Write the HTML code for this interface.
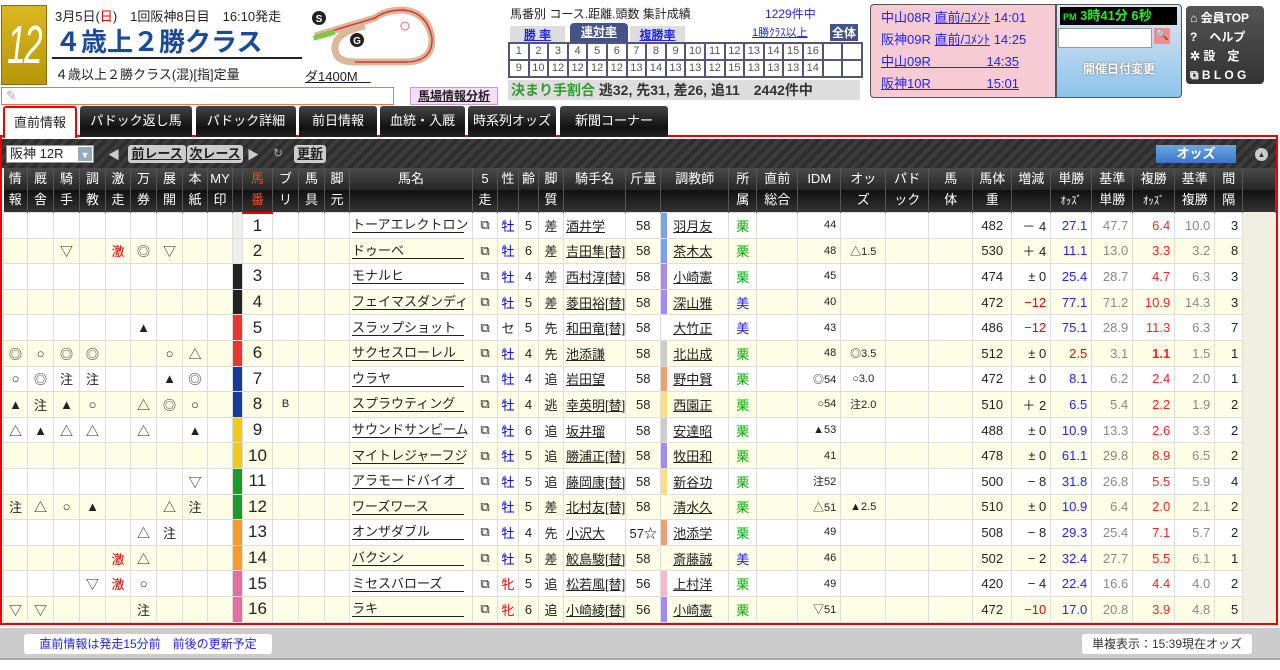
<!DOCTYPE html>
<html><head><meta charset="utf-8">
<style>
*{box-sizing:border-box;margin:0;padding:0}
body{width:1280px;height:670px;overflow:hidden;background:#fff;font-family:"Liberation Sans","Noto Sans CJK JP",sans-serif;font-size:13px;color:#222;position:relative}
.a{position:absolute}
a,u{color:inherit}
.badge{left:1px;top:5px;width:46px;height:80px;background:linear-gradient(#d9b820,#b8960a);border:1px solid #8a7000;overflow:hidden}
.badge b{display:block;color:#fff;font:italic 54px "Liberation Sans Narrow","Liberation Sans",sans-serif;text-align:center;line-height:78px;letter-spacing:-3px;transform:scaleX(0.62);margin-left:-14px;width:72px}
.tab{top:106px;height:31px;background:linear-gradient(#444,#111 70%,#222);color:#fff;font-size:13px;text-align:center;line-height:30px;border-radius:3px 3px 0 0}
table{border-collapse:collapse;table-layout:fixed;position:absolute;left:3px;top:168px}
td{border:1px solid #ddd;height:25.6px;text-align:center;font-size:13px;white-space:nowrap;overflow:hidden;padding:0}
th{background:linear-gradient(#4a4a4a,#262626 50%,#111 50%,#333);color:#fff;font-weight:normal;font-size:13px;line-height:21px;height:42px;border-right:1px solid #555;vertical-align:top}
tr.y td{background:#fefee6}
td.f{background:#f1efe1 !important;border-color:#f1efe1}
.n{font-size:17px}
.hn{text-align:left;padding-left:2px}
.hn u{display:inline-block;width:112px;text-decoration:none;border-bottom:1px solid #222;line-height:15px}
.m{color:#00f}.fm{color:#f00}
.jk{text-align:left;padding-left:2px}
.jk u{text-decoration:underline}
.tr{text-align:left;position:relative;padding-left:12px}
.tr i{position:absolute;left:0;top:0;bottom:0;width:6px}
.rt{color:#0a0}.mh{color:#22f}
.r{text-align:right;padding-right:4px}
.tb{color:#22f}.gk{color:#888}.fk{color:#f22}
.dk{border-left:1px solid #999}
.grid span{border:1px solid #557;height:17px;text-align:center;line-height:15px}
</style></head><body>
<div class="a badge"><b>12</b></div>
<div class="a" style="left:55px;top:6px;font-size:13px">3月5日(<span style="color:#e00">日</span>)　1回阪神8日目　16:10発走</div>
<div class="a" style="left:55px;top:22px;font-size:26px;font-weight:bold;color:#1a4a9a;letter-spacing:0px">４歳上２勝クラス</div>
<div class="a" style="left:52px;top:57px;width:250px;border-top:2px solid #222"></div>
<div class="a" style="left:55px;top:64px;font-size:13px">４歳以上２勝クラス(混)[指]定量</div>
<svg class="a" style="left:305px;top:2px" width="130" height="65" viewBox="0 0 130 65">
<path d="M10 34 L70 16 Q80 8 98 8 Q122 10 127 36 Q128 60 100 60 L50 60 Q30 60 30 46 Q30 30 60 24" fill="none" stroke="#d9b99a" stroke-width="7"/>
<path d="M10 34 L70 16 Q80 8 98 8 Q122 10 127 36 Q128 60 100 60 L50 60" fill="none" stroke="#d33" stroke-width="1.5"/>
<rect x="8" y="31" width="22" height="5" fill="#7c4" transform="rotate(-16 18 33)"/>
<circle cx="14" cy="16" r="7" fill="#222"/><text x="14" y="20" font-size="10" fill="#fff" text-anchor="middle" font-weight="bold">S</text>
<circle cx="52" cy="38" r="7" fill="#222"/><text x="52" y="42" font-size="10" fill="#fff" text-anchor="middle" font-weight="bold">G</text>
<circle cx="100" cy="24" r="4" fill="none" stroke="#e66"/>
</svg>
<div class="a" style="left:305px;top:66px;font-size:13px;text-decoration:underline">ダ1400M　</div>
<div class="a" style="left:1px;top:87px;width:393px;height:18px;border:1px solid #f07050"></div>
<div class="a" style="left:6px;top:88px;color:#aaa">✎</div>
<div class="a" style="left:410px;top:87px;width:88px;height:18px;background:#f6dcf6;border:1px solid #c9c;font-size:12px;font-weight:bold;text-align:center;line-height:16px;text-decoration:underline">馬場情報分析</div>

<div class="a" style="left:510px;top:5px;font-size:12px">馬番別 コース.距離.頭数 集計成績</div>
<div class="a" style="left:765px;top:5px;font-size:12px;color:#22f">1229件中</div>
<div class="a" style="left:510px;top:26px;width:55px;height:16px;background:#ddd;color:#22f;font-size:12px;font-weight:bold;text-align:center;text-decoration:underline">勝 率</div>
<div class="a" style="left:570px;top:23px;width:58px;height:19px;background:#44548a;color:#fff;font-size:12px;font-weight:bold;text-align:center;line-height:19px;border-radius:4px 4px 0 0;text-decoration:underline">連対率</div>
<div class="a" style="left:630px;top:26px;width:55px;height:16px;background:#ddd;color:#22f;font-size:12px;font-weight:bold;text-align:center;text-decoration:underline">複勝率</div>
<div class="a" style="left:752px;top:24px;font-size:11px;color:#22f;text-decoration:underline">1勝ｸﾗｽ以上</div>
<div class="a" style="left:830px;top:24px;width:28px;height:17px;background:#44548a;color:#fff;font-size:12px;font-weight:bold;text-align:center">全体</div>
<div class="a grid" style="left:508px;top:42px;display:grid;grid-template-columns:repeat(18,19.6px);font-size:11px;color:#555;border:1px solid #557;">
<span>1</span><span>2</span><span>3</span><span>4</span><span>5</span><span>6</span><span>7</span><span>8</span><span>9</span><span>10</span><span>11</span><span>12</span><span>13</span><span>14</span><span>15</span><span>16</span><span></span><span></span>
<span>9</span><span>10</span><span>12</span><span>12</span><span>12</span><span>12</span><span>13</span><span>14</span><span>13</span><span>13</span><span>12</span><span>15</span><span>13</span><span>13</span><span>13</span><span>14</span><span></span><span></span>
</div>
<div class="a" style="left:508px;top:80px;width:352px;height:20px;background:#ddd;font-size:14px;font-weight:bold;line-height:20px;padding-left:3px;color:#333"><span style="color:#393">決まり手割合</span> 逃32, 先31, 差26, 追11　2442件中</div>

<div class="a" style="left:870px;top:4px;width:186px;height:94px;background:#f7cbd3;border:1px solid #555;border-radius:4px 0 0 4px;color:#22f;font-size:13px;line-height:22px;padding:2px 0 0 10px">
<div>中山08R <u>直前/ｺﾒﾝﾄ</u> 14:01</div><div>阪神09R <u>直前/ｺﾒﾝﾄ</u> 14:25</div><div><u>中山09R　　　　 14:35</u></div><div><u>阪神10R　　　　 15:01</u></div></div>
<div class="a" style="left:1056px;top:4px;width:126px;height:94px;background:linear-gradient(#dfe6f0,#8cc4ec);border:1px solid #555;border-radius:0 4px 4px 0"></div>
<div class="a" style="left:1060px;top:7px;width:117px;height:18px;background:#000;color:#2e2;font-size:13px;font-weight:bold;line-height:18px;padding-left:3px"><span style="font-size:9px">PM</span> 3時41分 6秒</div>
<div class="a" style="left:1058px;top:28px;width:94px;height:20px;background:#fff;border:1px solid #999"></div>
<div class="a" style="left:1154px;top:28px;width:16px;height:16px;background:#f88;color:#fff;font-size:11px;text-align:center">🔍</div>
<div class="a" style="left:1056px;top:60px;width:126px;text-align:center;color:#fff;font-weight:bold;font-size:12px;text-shadow:0 0 2px #666">開催日付変更</div>
<div class="a" style="left:1186px;top:6px;width:78px;height:78px;background:linear-gradient(#555,#333);border-radius:4px;color:#fff;font-weight:bold;font-size:12px;line-height:19px;padding:3px 0 0 4px">
<div>⌂ 会員TOP</div><div>?　ヘルプ</div><div>✲ 設　定</div><div>⧉ B L O G</div></div>

<div class="a" style="left:0;top:135px;width:1278px;height:490px;border:2px solid #e00"></div>
<div class="a" style="left:3px;top:106px;width:74px;height:32px;background:#fff;border:2px solid #e00;border-bottom:0;border-radius:3px 3px 0 0;text-align:center;line-height:30px">直前情報</div>
<div class="a tab" style="left:80px;width:112px">パドック返し馬</div>
<div class="a tab" style="left:196px;width:100px">パドック詳細</div>
<div class="a tab" style="left:299px;width:78px">前日情報</div>
<div class="a tab" style="left:380px;width:85px">血統・入厩</div>
<div class="a tab" style="left:468px;width:88px">時系列オッズ</div>
<div class="a tab" style="left:560px;width:108px">新聞コーナー</div>

<div class="a" style="left:2px;top:139px;width:1274px;height:29px;background:repeating-linear-gradient(135deg,#2e2e2e 0 4px,#3c3c3c 4px 8px)"></div>
<div class="a" style="left:6px;top:145px;width:88px;height:18px;background:#fff;border:1px solid #999;font-size:13px;line-height:16px;padding-left:3px">阪神 12R <span style="position:absolute;right:1px;top:1px;width:14px;height:14px;background:#9ab;color:#fff;font-size:9px;text-align:center">▼</span></div>
<div class="a" style="left:108px;top:146px;color:#ccc;font-size:12px">◀</div>
<div class="a" style="left:128px;top:145px;width:58px;height:18px;background:#ccc;border-radius:3px;font-weight:bold;text-align:center;line-height:18px;text-decoration:underline">前レース</div>
<div class="a" style="left:187px;top:145px;width:56px;height:18px;background:#ccc;border-radius:3px;font-weight:bold;text-align:center;line-height:18px;text-decoration:underline">次レース</div>
<div class="a" style="left:247px;top:146px;color:#ccc;font-size:12px">▶</div>
<div class="a" style="left:273px;top:146px;color:#aaa;font-size:12px">↻</div>
<div class="a" style="left:294px;top:145px;width:32px;height:18px;background:#ccc;border-radius:3px;font-weight:bold;text-align:center;line-height:18px;text-decoration:underline">更新</div>
<div class="a" style="left:1156px;top:145px;width:80px;height:18px;background:linear-gradient(#6ba5e0,#3a78c8);color:#fff;font-weight:bold;text-align:center;line-height:18px">オッズ</div>
<div class="a" style="left:1255px;top:148px;width:13px;height:13px;border-radius:50%;background:#ccc;color:#333;font-size:8px;text-align:center;line-height:13px">▲</div>

<table>
<colgroup><col style="width:24px"><col style="width:26px"><col style="width:26px"><col style="width:26px"><col style="width:25px"><col style="width:26px"><col style="width:26px"><col style="width:25px"><col style="width:25px"><col style="width:10px"><col style="width:30px"><col style="width:26px"><col style="width:26px"><col style="width:25px"><col style="width:123px"><col style="width:25px"><col style="width:21px"><col style="width:20px"><col style="width:25px"><col style="width:62px"><col style="width:35px"><col style="width:68px"><col style="width:28px"><col style="width:41px"><col style="width:43px"><col style="width:45px"><col style="width:43px"><col style="width:44px"><col style="width:39px"><col style="width:39px"><col style="width:41px"><col style="width:41px"><col style="width:42px"><col style="width:40px"><col style="width:28px"><col style="width:33px"></colgroup>
<tr><th>情<br>報</th><th>厩<br>舎</th><th>騎<br>手</th><th>調<br>教</th><th>激<br>走</th><th>万<br>券</th><th>展<br>開</th><th>本<br>紙</th><th>MY<br>印</th><th></th><th style="color:#f42;border-bottom:2px solid #e00">馬<br>番</th><th>ブ<br>リ</th><th>馬<br>具</th><th>脚<br>元</th><th>馬名</th><th>5<br>走</th><th>性</th><th>齢</th><th>脚<br>質</th><th>騎手名</th><th>斤量</th><th>調教師</th><th>所<br>属</th><th>直前<br>総合</th><th>IDM</th><th>オッ<br>ズ</th><th>パド<br>ック</th><th>馬<br>体</th><th>馬体<br>重</th><th>増減</th><th>単勝<br><small>ｵｯｽﾞ</small></th><th>基準<br>単勝</th><th>複勝<br><small>ｵｯｽﾞ</small></th><th>基準<br>複勝</th><th>間<br>隔</th><th></th></tr>

<tr><td></td><td></td><td></td><td></td><td></td><td></td><td></td><td></td><td></td><td style="background:#eee"></td><td class="n">1</td><td></td><td></td><td></td><td class="hn"><u>トーアエレクトロン</u></td><td>⧉</td><td class="m dk">牡</td><td>5</td><td>差</td><td class="jk dk"><u>酒井学</u></td><td>58</td><td class="tr"><i style="background:#7aa0f0"></i><u>羽月友</u></td><td class="rt">栗</td><td class="dk"></td><td class="r" style="font-size:11px">44</td><td></td><td></td><td class="dk"></td><td>482</td><td class="r">－ 4</td><td class="r tb">27.1</td><td class="r gk">47.7</td><td class="r fk">6.4</td><td class="r gk">10.0</td><td class="r dk">3</td><td class="f"></td></tr>
<tr class="y"><td></td><td></td><td>▽</td><td></td><td style="color:#e00">激</td><td>◎</td><td>▽</td><td></td><td></td><td style="background:#eee !important"></td><td class="n">2</td><td></td><td></td><td></td><td class="hn"><u>ドゥーベ</u></td><td>⧉</td><td class="m dk">牡</td><td>6</td><td>差</td><td class="jk dk"><u>吉田隼[替]</u></td><td>58</td><td class="tr"><i style="background:#7aa0f0"></i><u>茶木太</u></td><td class="rt">栗</td><td class="dk"></td><td class="r" style="font-size:11px">48</td><td style="font-size:11px">△1.5</td><td></td><td class="dk"></td><td>530</td><td class="r">＋ 4</td><td class="r tb">11.1</td><td class="r gk">13.0</td><td class="r fk">3.3</td><td class="r gk">3.2</td><td class="r dk">8</td><td class="f"></td></tr>
<tr><td></td><td></td><td></td><td></td><td></td><td></td><td></td><td></td><td></td><td style="background:#222"></td><td class="n">3</td><td></td><td></td><td></td><td class="hn"><u>モナルヒ</u></td><td>⧉</td><td class="m dk">牡</td><td>4</td><td>差</td><td class="jk dk"><u>西村淳[替]</u></td><td>58</td><td class="tr"><i style="background:#a58af0"></i><u>小崎憲</u></td><td class="rt">栗</td><td class="dk"></td><td class="r" style="font-size:11px">45</td><td></td><td></td><td class="dk"></td><td>474</td><td class="r">± 0</td><td class="r tb">25.4</td><td class="r gk">28.7</td><td class="r fk">4.7</td><td class="r gk">6.3</td><td class="r dk">3</td><td class="f"></td></tr>
<tr class="y"><td></td><td></td><td></td><td></td><td></td><td></td><td></td><td></td><td></td><td style="background:#222 !important"></td><td class="n">4</td><td></td><td></td><td></td><td class="hn"><u>フェイマスダンディ</u></td><td>⧉</td><td class="m dk">牡</td><td>5</td><td>差</td><td class="jk dk"><u>菱田裕[替]</u></td><td>58</td><td class="tr"><i style="background:#a58af0"></i><u>深山雅</u></td><td class="mh">美</td><td class="dk"></td><td class="r" style="font-size:11px">40</td><td></td><td></td><td class="dk"></td><td>472</td><td class="r" style="color:#e00">−12</td><td class="r tb">77.1</td><td class="r gk">71.2</td><td class="r fk">10.9</td><td class="r gk">14.3</td><td class="r dk">3</td><td class="f"></td></tr>
<tr><td></td><td></td><td></td><td></td><td></td><td>▲</td><td></td><td></td><td></td><td style="background:#e33"></td><td class="n">5</td><td></td><td></td><td></td><td class="hn"><u>スラップショット</u></td><td>⧉</td><td class="dk">セ</td><td>5</td><td>先</td><td class="jk dk"><u>和田竜[替]</u></td><td>58</td><td class="tr"><i></i><u>大竹正</u></td><td class="mh">美</td><td class="dk"></td><td class="r" style="font-size:11px">43</td><td></td><td></td><td class="dk"></td><td>486</td><td class="r" style="color:#e00">−12</td><td class="r tb">75.1</td><td class="r gk">28.9</td><td class="r fk">11.3</td><td class="r gk">6.3</td><td class="r dk">7</td><td class="f"></td></tr>
<tr class="y"><td>◎</td><td>○</td><td>◎</td><td>◎</td><td></td><td></td><td>○</td><td>△</td><td></td><td style="background:#e33 !important"></td><td class="n">6</td><td></td><td></td><td></td><td class="hn"><u>サクセスローレル</u></td><td>⧉</td><td class="m dk">牡</td><td>4</td><td>先</td><td class="jk dk"><u>池添謙</u></td><td>58</td><td class="tr"><i style="background:#ccc"></i><u>北出成</u></td><td class="rt">栗</td><td class="dk"></td><td class="r" style="font-size:11px">48</td><td style="font-size:11px">◎3.5</td><td></td><td class="dk"></td><td>512</td><td class="r">± 0</td><td class="r" style="color:#e00">2.5</td><td class="r gk">3.1</td><td class="r fk"><b>1.1</b></td><td class="r gk">1.5</td><td class="r dk">1</td><td class="f"></td></tr>
<tr><td>○</td><td>◎</td><td>注</td><td>注</td><td></td><td></td><td>▲</td><td>◎</td><td></td><td style="background:#1a3a9a"></td><td class="n">7</td><td></td><td></td><td></td><td class="hn"><u>ウラヤ</u></td><td>⧉</td><td class="m dk">牡</td><td>4</td><td>追</td><td class="jk dk"><u>岩田望</u></td><td>58</td><td class="tr"><i style="background:#f0a070"></i><u>野中賢</u></td><td class="rt">栗</td><td class="dk"></td><td class="r" style="font-size:11px">◎54</td><td style="font-size:11px">○3.0</td><td></td><td class="dk"></td><td>472</td><td class="r">± 0</td><td class="r tb">8.1</td><td class="r gk">6.2</td><td class="r fk">2.4</td><td class="r gk">2.0</td><td class="r dk">1</td><td class="f"></td></tr>
<tr class="y"><td>▲</td><td>注</td><td>▲</td><td>○</td><td></td><td>△</td><td>◎</td><td>○</td><td></td><td style="background:#1a3a9a !important"></td><td class="n">8</td><td style="font-size:11px">B</td><td></td><td></td><td class="hn"><u>スプラウティング</u></td><td>⧉</td><td class="m dk">牡</td><td>4</td><td>逃</td><td class="jk dk"><u>幸英明[替]</u></td><td>58</td><td class="tr"><i style="background:#f8e080"></i><u>西園正</u></td><td class="rt">栗</td><td class="dk"></td><td class="r" style="font-size:11px">○54</td><td style="font-size:11px">注2.0</td><td></td><td class="dk"></td><td>510</td><td class="r">＋ 2</td><td class="r tb">6.5</td><td class="r gk">5.4</td><td class="r fk">2.2</td><td class="r gk">1.9</td><td class="r dk">2</td><td class="f"></td></tr>
<tr><td>△</td><td>▲</td><td>△</td><td>△</td><td></td><td>△</td><td></td><td>▲</td><td></td><td style="background:#f0cc10"></td><td class="n">9</td><td></td><td></td><td></td><td class="hn"><u>サウンドサンビーム</u></td><td>⧉</td><td class="m dk">牡</td><td>6</td><td>追</td><td class="jk dk"><u>坂井瑠</u></td><td>58</td><td class="tr"><i style="background:#ccc"></i><u>安達昭</u></td><td class="rt">栗</td><td class="dk"></td><td class="r" style="font-size:11px">▲53</td><td></td><td></td><td class="dk"></td><td>488</td><td class="r">± 0</td><td class="r tb">10.9</td><td class="r gk">13.3</td><td class="r fk">2.6</td><td class="r gk">3.3</td><td class="r dk">2</td><td class="f"></td></tr>
<tr class="y"><td></td><td></td><td></td><td></td><td></td><td></td><td></td><td></td><td></td><td style="background:#f0cc10 !important"></td><td class="n">10</td><td></td><td></td><td></td><td class="hn"><u>マイトレジャーフジ</u></td><td>⧉</td><td class="m dk">牡</td><td>5</td><td>追</td><td class="jk dk"><u>勝浦正[替]</u></td><td>58</td><td class="tr"><i style="background:#a58af0"></i><u>牧田和</u></td><td class="rt">栗</td><td class="dk"></td><td class="r" style="font-size:11px">41</td><td></td><td></td><td class="dk"></td><td>478</td><td class="r">± 0</td><td class="r tb">61.1</td><td class="r gk">29.8</td><td class="r fk">8.9</td><td class="r gk">6.5</td><td class="r dk">2</td><td class="f"></td></tr>
<tr><td></td><td></td><td></td><td></td><td></td><td></td><td></td><td>▽</td><td></td><td style="background:#1a9a2a"></td><td class="n">11</td><td></td><td></td><td></td><td class="hn"><u>アラモードバイオ</u></td><td>⧉</td><td class="m dk">牡</td><td>5</td><td>追</td><td class="jk dk"><u>藤岡康[替]</u></td><td>58</td><td class="tr"><i style="background:#f8e080"></i><u>新谷功</u></td><td class="rt">栗</td><td class="dk"></td><td class="r" style="font-size:11px">注52</td><td></td><td></td><td class="dk"></td><td>500</td><td class="r">− 8</td><td class="r tb">31.8</td><td class="r gk">26.8</td><td class="r fk">5.5</td><td class="r gk">5.9</td><td class="r dk">4</td><td class="f"></td></tr>
<tr class="y"><td>注</td><td>△</td><td>○</td><td>▲</td><td></td><td></td><td>△</td><td>注</td><td></td><td style="background:#1a9a2a !important"></td><td class="n">12</td><td></td><td></td><td></td><td class="hn"><u>ワーズワース</u></td><td>⧉</td><td class="m dk">牡</td><td>5</td><td>差</td><td class="jk dk"><u>北村友[替]</u></td><td>58</td><td class="tr"><i></i><u>清水久</u></td><td class="rt">栗</td><td class="dk"></td><td class="r" style="font-size:11px">△51</td><td style="font-size:11px">▲2.5</td><td></td><td class="dk"></td><td>510</td><td class="r">± 0</td><td class="r tb">10.9</td><td class="r gk">6.4</td><td class="r fk">2.0</td><td class="r gk">2.1</td><td class="r dk">2</td><td class="f"></td></tr>
<tr><td></td><td></td><td></td><td></td><td></td><td>△</td><td>注</td><td></td><td></td><td style="background:#f59a30"></td><td class="n">13</td><td></td><td></td><td></td><td class="hn"><u>オンザダブル</u></td><td>⧉</td><td class="m dk">牡</td><td>4</td><td>先</td><td class="jk dk"><u>小沢大</u></td><td>57☆</td><td class="tr"><i style="background:#f0a070"></i><u>池添学</u></td><td class="rt">栗</td><td class="dk"></td><td class="r" style="font-size:11px">49</td><td></td><td></td><td class="dk"></td><td>508</td><td class="r">− 8</td><td class="r tb">29.3</td><td class="r gk">25.4</td><td class="r fk">7.1</td><td class="r gk">5.7</td><td class="r dk">2</td><td class="f"></td></tr>
<tr class="y"><td></td><td></td><td></td><td></td><td style="color:#e00">激</td><td>△</td><td></td><td></td><td></td><td style="background:#f59a30 !important"></td><td class="n">14</td><td></td><td></td><td></td><td class="hn"><u>バクシン</u></td><td>⧉</td><td class="m dk">牡</td><td>5</td><td>差</td><td class="jk dk"><u>鮫島駿[替]</u></td><td>58</td><td class="tr"><i></i><u>斎藤誠</u></td><td class="mh">美</td><td class="dk"></td><td class="r" style="font-size:11px">46</td><td></td><td></td><td class="dk"></td><td>502</td><td class="r">− 2</td><td class="r tb">32.4</td><td class="r gk">27.7</td><td class="r fk">5.5</td><td class="r gk">6.1</td><td class="r dk">1</td><td class="f"></td></tr>
<tr><td></td><td></td><td></td><td>▽</td><td style="color:#e00">激</td><td>○</td><td></td><td></td><td></td><td style="background:#e070a0"></td><td class="n">15</td><td></td><td></td><td></td><td class="hn"><u>ミセスバローズ</u></td><td>⧉</td><td class="fm dk">牝</td><td>5</td><td>追</td><td class="jk dk"><u>松若風[替]</u></td><td>56</td><td class="tr"><i style="background:#f8b8c8"></i><u>上村洋</u></td><td class="rt">栗</td><td class="dk"></td><td class="r" style="font-size:11px">49</td><td></td><td></td><td class="dk"></td><td>420</td><td class="r">− 4</td><td class="r tb">22.4</td><td class="r gk">16.6</td><td class="r fk">4.4</td><td class="r gk">4.0</td><td class="r dk">2</td><td class="f"></td></tr>
<tr class="y"><td>▽</td><td>▽</td><td></td><td></td><td></td><td>注</td><td></td><td></td><td></td><td style="background:#e070a0 !important"></td><td class="n">16</td><td></td><td></td><td></td><td class="hn"><u>ラキ</u></td><td>⧉</td><td class="fm dk">牝</td><td>6</td><td>追</td><td class="jk dk"><u>小崎綾[替]</u></td><td>56</td><td class="tr"><i style="background:#a58af0"></i><u>小崎憲</u></td><td class="rt">栗</td><td class="dk"></td><td class="r" style="font-size:11px">▽51</td><td></td><td></td><td class="dk"></td><td>472</td><td class="r" style="color:#e00">−10</td><td class="r tb">17.0</td><td class="r gk">20.8</td><td class="r fk">3.9</td><td class="r gk">4.8</td><td class="r dk">5</td><td class="f"></td></tr>
</table>

<div class="a" style="left:0;top:628px;width:1280px;height:32px;background:#ccc;border-bottom:2px solid #aaa"></div>
<div class="a" style="left:24px;top:634px;width:248px;height:20px;background:#fff;border-radius:3px;color:#22f;font-size:12px;line-height:20px;text-align:center">直前情報は発走15分前　前後の更新予定</div>
<div class="a" style="left:1082px;top:634px;width:170px;height:20px;background:#fff;border-radius:3px;color:#333;font-size:12px;line-height:20px;text-align:center">単複表示：15:39現在オッズ</div>
</body></html>
